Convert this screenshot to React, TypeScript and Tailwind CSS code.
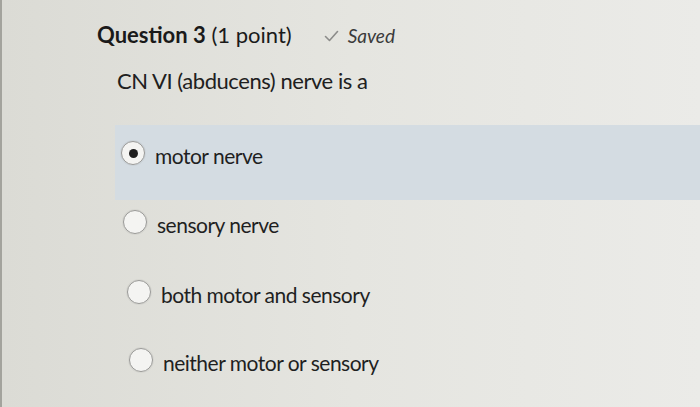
function Radio({ checked }: { checked?: boolean }) {
  return (
    <span className="shrink-0 w-[24px] h-[24px] rounded-full border-[1.5px] border-[#9a9a98] bg-[#f4f4f2] flex items-center justify-center shadow-[0_0_0_1px_rgba(0,0,0,0.04)]">
      {checked && <span className="w-[9px] h-[9px] rounded-full bg-[#1e1e1e]" />}
    </span>
  );
}

function Option({ label, checked, className }: { label: string; checked?: boolean; className?: string }) {
  return (
    <div className={"flex items-start gap-[10px] " + (className ?? "")}>
      <Radio checked={checked} />
      <span className="text-[21px] leading-[30px] tracking-[-0.5px] text-[#1f1f1f]">{label}</span>
    </div>
  );
}

export default function App() {
  return (
    <div
      className="w-[700px] h-[407px] overflow-hidden border-l-[2px] border-[#a3a39d] bg-gradient-to-r from-[#dbdbd5] via-[#e5e5e0] to-[#ebebe8] pt-[21px]"
      style={{ fontFamily: "Lato, 'Open Sans', sans-serif" }}
    >
      {/* Header */}
      <div className="flex items-baseline pl-[95px] leading-[28px]">
        <span className="text-[22px] text-[#1a1a1a]">
          <span className="font-bold">Question 3</span> (1 point)
        </span>
        <svg className="ml-[32px] w-[15px] h-[12px] self-center mt-[1px]" viewBox="0 0 15 12" fill="none">
          <path d="M1.5 6.5 L5.5 10.5 L13.5 1.5" stroke="#8c8c8a" strokeWidth="1.6" strokeLinecap="round" strokeLinejoin="round" />
        </svg>
        <span className="ml-[9px] text-[19px] italic text-[#3a3a3a]">Saved</span>
      </div>

      {/* Question */}
      <p className="mt-[17px] pl-[115px] text-[22px] leading-[28px] tracking-[-0.45px] text-[#202020]">CN VI (abducens) nerve is a</p>

      {/* Options */}
      <div className="mt-[30px] ml-[113px] bg-[#d4dce2] pt-[16px] pb-[29px] pl-[6px]">
        <Option label="motor nerve" checked />
      </div>
      <Option label="sensory nerve" className="mt-[10px] ml-[121px]" />
      <Option label="both motor and sensory" className="mt-[40px] ml-[125px]" />
      <Option label="neither motor or sensory" className="mt-[38px] ml-[127px]" />
    </div>
  );
}
